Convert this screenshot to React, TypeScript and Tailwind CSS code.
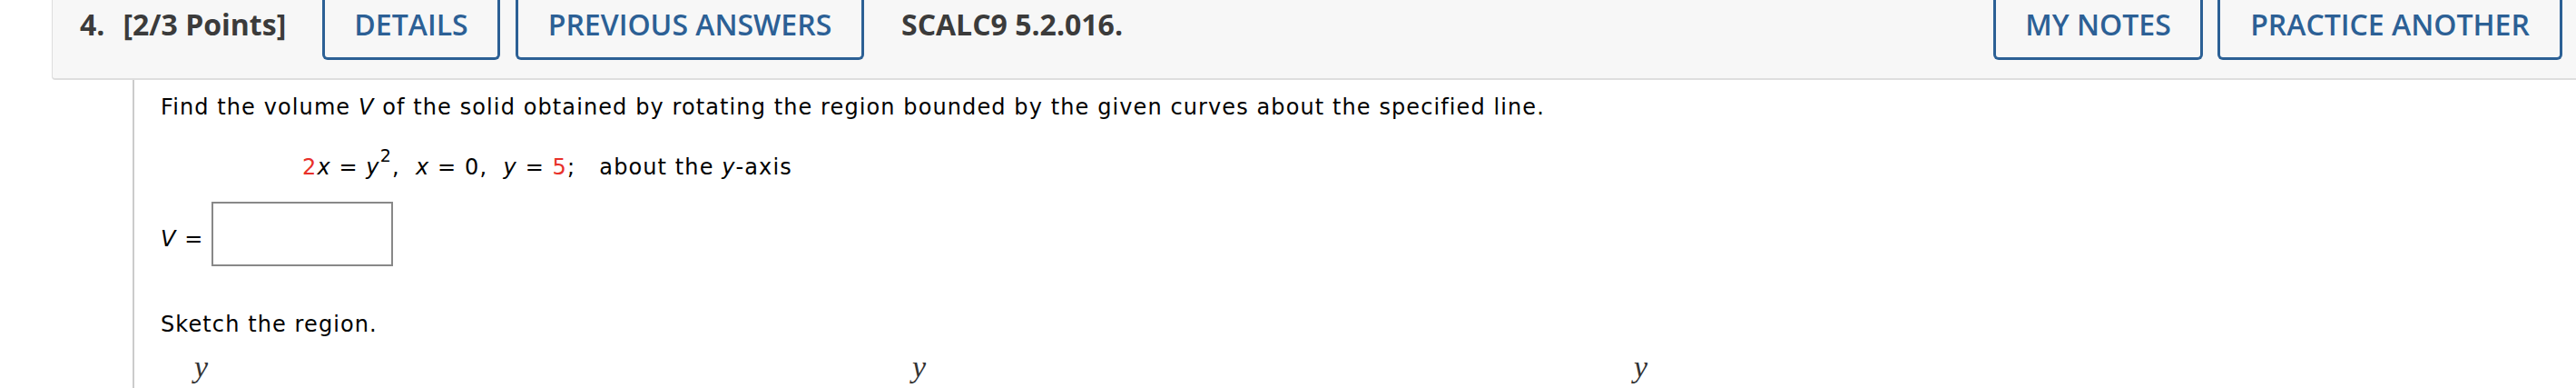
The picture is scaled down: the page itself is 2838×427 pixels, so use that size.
import React from "react";

function HeaderButton({ label, w }: { label: string; w: string }) {
  return (
    <div
      className={`${w} shrink-0 h-[66px] border-x-[3px] border-b-[3px] border-t-0 border-[#2c6095] rounded-b-[6px] text-[#2c6095] text-center pt-[5px] text-[32px] leading-[44px] font-semibold`}
    >
      {label}
    </div>
  );
}

export default function App() {
  return (
    <div className="w-[2838px] h-[427px] bg-white overflow-hidden">
      {/* Header */}
      <div className="ml-[57px] h-[88px] bg-[#f7f7f7] border-l border-b-2 border-[#dedede] rounded-bl-[4px] flex items-start font-['Open_Sans',sans-serif]">
        <div className="w-[297px] shrink-0 pl-[30px] pt-[5px] text-[32px] leading-[44px] font-bold text-[#3b3b3b] whitespace-nowrap">
          4.<span className="ml-[20px]">[2/3 Points]</span>
        </div>
        <div className="flex gap-[17px]">
          <HeaderButton label="DETAILS" w="w-[196px]" />
          <HeaderButton label="PREVIOUS ANSWERS" w="w-[384px]" />
        </div>
        <div className="ml-[41px] pt-[5px] text-[32px] leading-[44px] font-bold text-[#3b3b3b] whitespace-nowrap">
          SCALC9 5.2.016.
        </div>
        <div className="flex-1" />
        <div className="flex gap-[16px] mr-[15px]">
          <HeaderButton label="MY NOTES" w="w-[231px]" />
          <HeaderButton label="PRACTICE ANOTHER" w="w-[380px]" />
        </div>
      </div>

      {/* Content */}
      <div className="ml-[146px] h-[339px] border-l-2 border-[#cccccc] pl-[29px] pt-[16px] font-['DejaVu_Sans',Verdana,sans-serif] text-[24px] leading-[28px] tracking-[1.1px] text-black">
        <p className="whitespace-nowrap">
          Find the volume <i>V</i> of the solid obtained by rotating the region bounded by the given curves about the specified line.
        </p>
        <p className="mt-[38px] pl-[156px] whitespace-nowrap">
          <span className="text-[#e8302a]">2</span>
          <i>x</i> = <i>y</i>
          <span className="relative top-[-14px] text-[19px] leading-none">2</span>
          ,&nbsp;&nbsp;<i>x</i> = 0,&nbsp;&nbsp;<i>y</i> = <span className="text-[#e8302a]">5</span>;&nbsp;&nbsp;&nbsp;about the <i>y</i>-axis
        </p>
        <div className="mt-[24px] flex items-start">
          <div className="w-[56px] shrink-0 mt-[27px] whitespace-nowrap">
            <i>V</i> =
          </div>
          <div className="w-[200px] h-[71px] border-2 border-[#888888] bg-white" />
        </div>
        <p className="mt-[50px] whitespace-nowrap">Sketch the region.</p>
        <div className="mt-[16px] flex font-['Liberation_Serif',serif] italic text-[34px] leading-[34px] text-[#333333]">
          <div className="w-[828px] shrink-0 pl-[37px]">y</div>
          <div className="w-[795px] shrink-0">y</div>
          <div className="w-[400px] shrink-0">y</div>
        </div>
      </div>
    </div>
  );
}
